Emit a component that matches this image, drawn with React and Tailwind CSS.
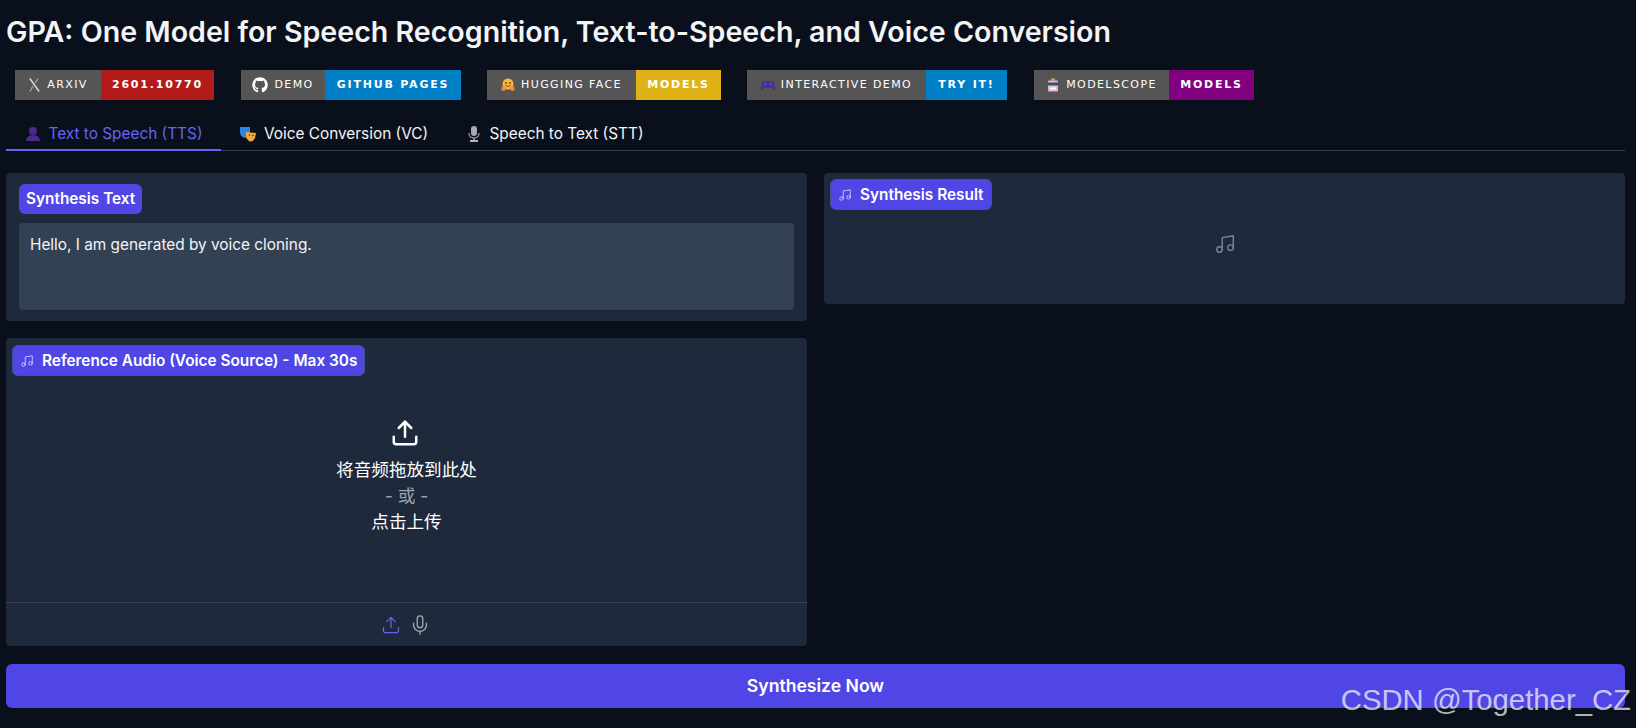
import { FaGithub } from 'react-icons/fa';
import { Mic, Music, Upload } from 'lucide-react';

const INTER = "font-['Inter','Noto_Sans_CJK_SC',sans-serif]";

function ArxivIcon() {
  return (
    <svg viewBox="0 0 14 16" className="h-[16px] w-[13px]">
      <path d="M2 1l10 14" stroke="#d9d9d9" strokeWidth="1.6" fill="none" />
      <path d="M11 1L7.500 6M5.500 9L2 15" stroke="#a8a8a8" strokeWidth="1.300" fill="none" />
    </svg>
  );
}

function HugIcon() {
  return (
    <svg viewBox="0 0 14 14" className="h-[14px] w-[14px]">
      <circle cx="7" cy="6" r="5.500" fill="#f9b93b" />
      <circle cx="5" cy="5" r="0.9" fill="#6b3f16" />
      <circle cx="9" cy="5" r="0.9" fill="#6b3f16" />
      <path d="M4.500 7.500q2.500 2 5 0" stroke="#6b3f16" strokeWidth="0.9" fill="none" />
      <circle cx="2.600" cy="10.600" r="2.400" fill="#f28c38" />
      <circle cx="11.400" cy="10.600" r="2.400" fill="#f28c38" />
    </svg>
  );
}

function GameIcon() {
  return (
    <svg viewBox="0 0 14 14" className="h-[14px] w-[14px]">
      <path d="M3 3h8q2.500 0 3 6l-.5 2.500q-1.500 1-3-1.500h-7q-1.500 2.500-3 1.500L0 9q.5-6 3-6z" fill="#4a2f8f" />
      <circle cx="4" cy="6" r="1" fill="#6d4fc0" />
      <circle cx="10" cy="6" r="1" fill="#6d4fc0" />
    </svg>
  );
}

function RobotIcon() {
  return (
    <svg viewBox="0 0 14 14" className="h-[15px] w-[14px]">
      <rect x="5" y="0" width="4" height="2" fill="#d9a93a" />
      <rect x="2" y="2" width="10" height="11" rx="1" fill="#e6b8cf" />
      <rect x="1" y="4" width="12" height="3" fill="#35506e" />
      <rect x="4" y="9" width="6" height="2" fill="#fff" />
    </svg>
  );
}

function PersonEmoji() {
  return (
    <svg viewBox="0 0 16 16" className="h-[16px] w-[16px]">
      <circle cx="8" cy="5" r="4" fill="#4b2a8c" />
      <path d="M1 15q0-6 7-6t7 6z" fill="#4b2a8c" />
    </svg>
  );
}

function MasksEmoji() {
  return (
    <svg viewBox="0 0 16 16" className="h-[16px] w-[16px]">
      <path d="M0 1h10v5q0 5-5 6-5-1-5-6z" fill="#2f86e0" />
      <path d="M6 6l10 1-1 5q-2 4-5 3.500-3-1-4-5z" fill="#f3a73a" />
      <circle cx="9.500" cy="9" r="0.8" fill="#5b3a10" />
      <circle cx="13" cy="9.500" r="0.8" fill="#5b3a10" />
    </svg>
  );
}

function MicEmoji() {
  return (
    <svg viewBox="0 0 16 16" className="h-[16px] w-[16px]">
      <rect x="5" y="0" width="6" height="10" rx="3" fill="#a9a9b5" />
      <path d="M3 7q0 5 5 5t5-5" stroke="#8a8a96" strokeWidth="1.400" fill="none" />
      <rect x="7" y="12" width="2" height="2" fill="#8a8a96" />
      <rect x="4" y="14" width="8" height="2" fill="#b4b4be" />
    </svg>
  );
}

const BADGES = [
  { icon: <ArxivIcon />, label: 'arXiv', value: '2601.10770', color: 'bg-[#b31b1b]', labelW: 'w-[86px]', valueW: 'w-[113px]', mr: 'mr-[27px]' },
  { icon: <FaGithub className="h-[16px] w-[16px] text-white" />, label: 'Demo', value: 'GitHub Pages', color: 'bg-[#007ec6]', labelW: 'w-[84px]', valueW: 'w-[136px]', mr: 'mr-[26px]' },
  { icon: <HugIcon />, label: 'Hugging Face', value: 'Models', color: 'bg-[#dfb317]', labelW: 'w-[149px]', valueW: 'w-[85px]', mr: 'mr-[26px]' },
  { icon: <GameIcon />, label: 'Interactive Demo', value: 'Try It!', color: 'bg-[#007ec6]', labelW: 'w-[179px]', valueW: 'w-[81px]', mr: 'mr-[27px]' },
  { icon: <RobotIcon />, label: 'ModelScope', value: 'Models', color: 'bg-[#800080]', labelW: 'w-[135px]', valueW: 'w-[85px]', mr: '' },
];

function Badge({ icon, label, value, color, labelW, valueW, mr }) {
  return (
    <div className={`flex h-[30px] font-['DejaVu_Sans',sans-serif] text-[11px] uppercase text-white ${mr}`}>
      <div className={`flex items-center justify-center gap-[6px] bg-[#555555] tracking-[1.400px] ${labelW}`}>
        {icon}
        <span>{label}</span>
      </div>
      <div className={`flex items-center justify-center font-bold tracking-[1.800px] ${color} ${valueW}`}>{value}</div>
    </div>
  );
}

function BlockLabel({ children, music }) {
  return (
    <div className="flex h-[31px] w-fit items-center gap-[8px] rounded-[6px] border border-[#475099] bg-[#4f46e5] px-[7px] text-[15.360px] font-semibold text-white">
      {music && <Music className="h-[14px] w-[14px] text-[#d4d0ff]" strokeWidth={1.5} />}
      {children}
    </div>
  );
}

export default function App() {
  return (
    <div className={`relative h-[728px] overflow-hidden bg-[#0a0f1c] pl-[6px] pr-[11px] ${INTER}`}>
      <h1 className="pt-[14px] text-[28.600px] font-semibold leading-[36px] text-[#f3f4f6]">
        GPA: One Model for Speech Recognition, Text-to-Speech, and Voice Conversion
      </h1>

      <div className="mt-[20px] flex pl-[9px]">
        {BADGES.map((b) => (
          <Badge key={b.label} {...b} />
        ))}
      </div>

      <div className="mt-[7px] flex h-[44px] border-b border-[#374151] pt-[1px] text-[15.360px]">
        <div className="-mb-px flex w-[215px] items-center justify-center gap-[8px] border-b-2 border-[#6366f1] pt-[10px] text-[#6366f1]">
          <PersonEmoji />
          Text to Speech (TTS)
        </div>
        <div className="flex w-[226px] items-center justify-center gap-[8px] pt-[10px] text-[#f3f4f6]">
          <MasksEmoji />
          Voice Conversion (VC)
        </div>
        <div className="flex w-[215px] items-center justify-center gap-[8px] pt-[10px] text-[#f3f4f6]">
          <MicEmoji />
          Speech to Text (STT)
        </div>
      </div>

      <div className="mt-[22px] grid grid-cols-2 items-start gap-[17px]">
        <div className="flex flex-col gap-[17px]">
          <div className="h-[148px] rounded-[4px] bg-[#1e293b] px-[13px] pt-[11px]">
            <div className="flex h-[30px] w-fit items-center rounded-[6px] bg-[#4f46e5] px-[7px] text-[15.360px] font-semibold text-white">
              Synthesis Text
            </div>
            <div className="mt-[9px] h-[87px] rounded-[4px] bg-[#334155] px-[11px] py-[11px] text-[15.360px] leading-[22px] text-[#f3f4f6]">
              Hello, I am generated by voice cloning.
            </div>
          </div>

          <div className="flex h-[308px] flex-col rounded-[4px] bg-[#1e293b]">
            <div className="px-[6px] pt-[7px]">
              <BlockLabel music>Reference Audio (Voice Source) - Max 30s</BlockLabel>
            </div>
            <div className="flex flex-1 flex-col items-center pt-[42px] text-[17.600px] leading-[26px] text-white">
              <Upload className="mb-[9px] mr-[3px] h-[30px] w-[30px]" strokeWidth={2} />
              <div>将音频拖放到此处</div>
              <div className="text-[#9ca3af]">- 或 -</div>
              <div>点击上传</div>
            </div>
            <div className="flex h-[44px] items-center justify-center gap-[8px] border-t border-[#374151] pr-[2px]">
              <Upload className="h-[20px] w-[20px] text-[#6366f1]" strokeWidth={1.5} />
              <Mic className="h-[22px] w-[22px] text-[#9ca3af]" strokeWidth={1.5} />
            </div>
          </div>
        </div>

        <div className="flex h-[131px] flex-col rounded-[4px] bg-[#1e293b] px-[6px] pt-[6px]">
          <BlockLabel music>Synthesis Result</BlockLabel>
          <div className="flex justify-center pt-[23px]">
            <Music className="h-[22px] w-[22px] text-[#7b8494]" strokeWidth={1.5} />
          </div>
        </div>
      </div>

      <div className="mt-[18px] flex h-[44px] items-center justify-center rounded-[6px] bg-[#4f46e5] text-[17.600px] font-semibold text-white">
        Synthesize Now
      </div>

      <div className="absolute bottom-[11px] right-[5px] font-['Liberation_Sans',sans-serif] text-[29.300px] leading-[34px] text-white/70">
        CSDN @Together_CZ
      </div>
    </div>
  );
}
